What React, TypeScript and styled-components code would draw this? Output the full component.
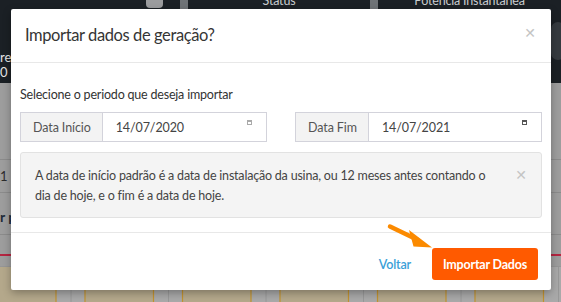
import styled, { createGlobalStyle } from "styled-components";

const GlobalStyle = createGlobalStyle`
  html, body {
    margin: 0;
    padding: 0;
  }
  body {
    font-family: Lato, "Liberation Sans", sans-serif;
    background: #9d9d9d;
  }
  * {
    box-sizing: border-box;
  }
`;

const Page = styled.div`
  position: relative;
  width: 561px;
  height: 302px;
  overflow: hidden;
  background: #9d9d9d;
  display: flex;
  flex-direction: column;
`;

/* ---------- dashboard behind the overlay ---------- */

const TopBar = styled.div`
  height: 83px;
  background: #1b2025;
  display: flex;
  flex-direction: column;
  flex-shrink: 0;
`;

const HeaderRow = styled.div`
  display: flex;
  height: 9px;
  align-items: flex-start;
`;

const Column = styled.div<{ $w: number }>`
  width: ${p => p.$w}px;
  flex-shrink: 0;
  display: flex;
  justify-content: center;
`;

const ColumnTitle = styled.span`
  font-size: 12.5px;
  line-height: 16px;
  letter-spacing: -0.2px;
  margin-top: -7px;
  color: #c9cdd0;
  white-space: nowrap;
`;

const Pill = styled.div`
  width: 27px;
  height: 8px;
  margin-left: 146px;
  background: #9b9c9e;
  border-radius: 0 0 4px 4px;
`;

const Separator = styled.div`
  width: 8px;
  height: 9px;
  flex-shrink: 0;
  background: #6f7377;
`;

const TopInfo = styled.div`
  display: flex;
  justify-content: space-between;
  align-items: flex-start;
  padding-top: 13px;
`;

const InfoText = styled.div`
  font-size: 13px;
  line-height: 15px;
  color: #e6e6e6;
  padding-top: 28px;
`;

const Knob = styled.div`
  width: 14px;
  height: 38px;
  margin-right: -4px;
  border-radius: 7px;
  background: #353a3f;
`;

const Row = styled.div<{ $h: number }>`
  height: ${p => p.$h}px;
  flex-shrink: 0;
  border-bottom: 1px solid #8b8b8b;
  display: flex;
  align-items: center;
  font-size: 13px;
  color: #2c2c2c;
`;

const BoldCell = styled.span`
  font-weight: 700;
  color: #1d2a38;
  font-size: 14px;
  padding-top: 6px;
`;

const RedLine = styled.div`
  height: 2px;
  margin-top: 19px;
  background: #b52641;
  flex-shrink: 0;
`;

const ChartArea = styled.div`
  margin-top: 10px;
  border-top: 1px solid #969696;
  flex: 1;
`;

const ChartBands = () => {
  const period = 97.5;
  const items = [];
  for (let i = -1; i < 6; i++) {
    const x = 56 + i * period;
    items.push(
      <g key={i}>
        <rect x={x} y={0} width={29} height={40} fill="#a9a9a9" />
        <line x1={x + 15} y1={0} x2={x + 15} y2={40} stroke="#989898" strokeWidth={1} />
        <line x1={x} y1={0} x2={x} y2={40} stroke="#c2922f" strokeWidth={1.2} />
        <line x1={x + 29} y1={0} x2={x + 29} y2={40} stroke="#c2922f" strokeWidth={1.2} />
      </g>
    );
  }
  return (
    <svg width="561" height="40" style={{ display: "block" }}>
      <rect x={0} y={0} width={561} height={40} fill="#b4a88b" />
      {items}
    </svg>
  );
};

/* ---------- modal ---------- */

const Modal = styled.div`
  position: absolute;
  top: 9px;
  left: 11px;
  width: 540px;
  background: #fff;
  border-radius: 2px;
  box-shadow: 0 3px 9px rgba(0, 0, 0, 0.3);
  color: #333;
`;

const ModalHeader = styled.div`
  display: flex;
  justify-content: space-between;
  align-items: flex-start;
  padding: 14px 15px 14px 14px;
  border-bottom: 1px solid #e8e8e8;
`;

const Title = styled.h4`
  margin: 0;
  font-size: 16.5px;
  font-weight: 400;
  letter-spacing: -0.4px;
  line-height: 25px;
  color: #353535;
`;

const CloseButton = styled.button<{ $size?: number; $top?: number }>`
  border: 0;
  background: none;
  padding: 0;
  margin-top: ${p => p.$top ?? 0}px;
  cursor: pointer;
  font-family: "DejaVu Sans", sans-serif;
  font-size: ${p => p.$size ?? 15}px;
  line-height: 1;
  color: #c4c4c4;
`;

const ModalBody = styled.div`
  padding: 23px 9px 14px 9px;
`;

const Label = styled.div`
  font-size: 12.5px;
  letter-spacing: -0.2px;
  line-height: 18px;
  margin-bottom: 8px;
  color: #333;
`;

const InputsGrid = styled.div`
  display: grid;
  grid-template-columns: 1fr 1fr;
  column-gap: 28px;
  margin-bottom: 10px;
`;

const InputGroup = styled.div`
  display: flex;
  height: 30px;
  border: 1px solid #d3d3db;
`;

const Addon = styled.span`
  display: flex;
  align-items: center;
  padding: 0 11px 0 12px;
  background: #f3f3f3;
  border-right: 1px solid #d3d3db;
  font-size: 12.5px;
  letter-spacing: -0.1px;
  color: #555;
  white-space: nowrap;
`;

const Field = styled.div`
  flex: 1;
  display: flex;
  align-items: center;
  justify-content: space-between;
  padding: 0 14px 0 13px;
  font-size: 12.5px;
  letter-spacing: -0.1px;
  color: #444;
`;

const CalendarGlyph = styled.span<{ $dark?: boolean }>`
  width: 5px;
  height: 5px;
  margin-top: -9px;
  border: 1px solid ${p => (p.$dark ? "#555" : "#aaa")};
  border-top-width: 2px;
`;

const Alert = styled.div`
  display: flex;
  justify-content: space-between;
  align-items: flex-start;
  padding: 13px 14px 11px 14px;
  background: #f4f4f4;
  border: 1px solid #e2e2e2;
  border-radius: 3px;
`;

const AlertText = styled.p`
  margin: 0;
  width: 462px;
  font-size: 12.5px;
  letter-spacing: -0.2px;
  line-height: 20px;
  color: #444;
`;

const ModalFooter = styled.div`
  display: flex;
  justify-content: flex-end;
  align-items: center;
  gap: 21px;
  padding: 15px 13px 10px;
  border-top: 1px solid #e8e8e8;
`;

const LinkButton = styled.button`
  border: 0;
  background: none;
  padding: 0;
  cursor: pointer;
  font-family: inherit;
  font-size: 12.5px;
  letter-spacing: -0.2px;
  font-weight: 600;
  color: #3a9fd8;
`;

const PrimaryButton = styled.button`
  height: 32px;
  padding: 0 11px;
  border: 0;
  border-radius: 3px;
  cursor: pointer;
  background: #ff5a00;
  color: #fff;
  font-family: inherit;
  font-size: 12.5px;
  letter-spacing: -0.2px;
  font-weight: 700;
`;

const ArrowOverlay = styled.svg`
  position: absolute;
  left: 0;
  top: 0;
  pointer-events: none;
`;

export default function App() {
  return (
    <>
      <GlobalStyle />
      <Page>
        <TopBar>
          <HeaderRow>
            <Pill />
            <Column $w={17} />
            <Separator />
            <Column $w={182}>
              <ColumnTitle>Status</ColumnTitle>
            </Column>
            <Separator />
            <Column $w={183}>
              <ColumnTitle>Potência Instantânea</ColumnTitle>
            </Column>
          </HeaderRow>
          <TopInfo>
            <InfoText>
              re
              <br />0
            </InfoText>
            <Knob />
          </TopInfo>
        </TopBar>
        <Row $h={77} />
        <Row $h={33}>1</Row>
        <Row $h={42}>
          <BoldCell>r p</BoldCell>
        </Row>
        <RedLine />
        <ChartArea>
          <ChartBands />
        </ChartArea>

        <Modal>
          <ModalHeader>
            <Title>Importar dados de geração?</Title>
            <CloseButton $size={14} $top={3}>✕</CloseButton>
          </ModalHeader>
          <ModalBody>
            <Label>Selecione o periodo que deseja importar</Label>
            <InputsGrid>
              <InputGroup>
                <Addon>Data Início</Addon>
                <Field>
                  14/07/2020
                  <CalendarGlyph />
                </Field>
              </InputGroup>
              <InputGroup>
                <Addon>Data Fim</Addon>
                <Field>
                  14/07/2021
                  <CalendarGlyph $dark />
                </Field>
              </InputGroup>
            </InputsGrid>
            <Alert>
              <AlertText>
                A data de início padrão é a data de instalação da usina, ou 12 meses antes contando o dia de hoje, e o fim é a data de hoje.
              </AlertText>
              <CloseButton $size={14} $top={2}>✕</CloseButton>
            </Alert>
          </ModalBody>
          <ModalFooter>
            <LinkButton>Voltar</LinkButton>
            <PrimaryButton>Importar Dados</PrimaryButton>
          </ModalFooter>
        </Modal>

        <ArrowOverlay width="561" height="302">
          <line x1="390" y1="226.5" x2="418" y2="240" stroke="#fb8a00" strokeWidth="4.5" strokeLinecap="round" />
          <polygon points="432,247.5 409,230 413.5,246.5" fill="#fb8a00" />
        </ArrowOverlay>
      </Page>
    </>
  );
}
